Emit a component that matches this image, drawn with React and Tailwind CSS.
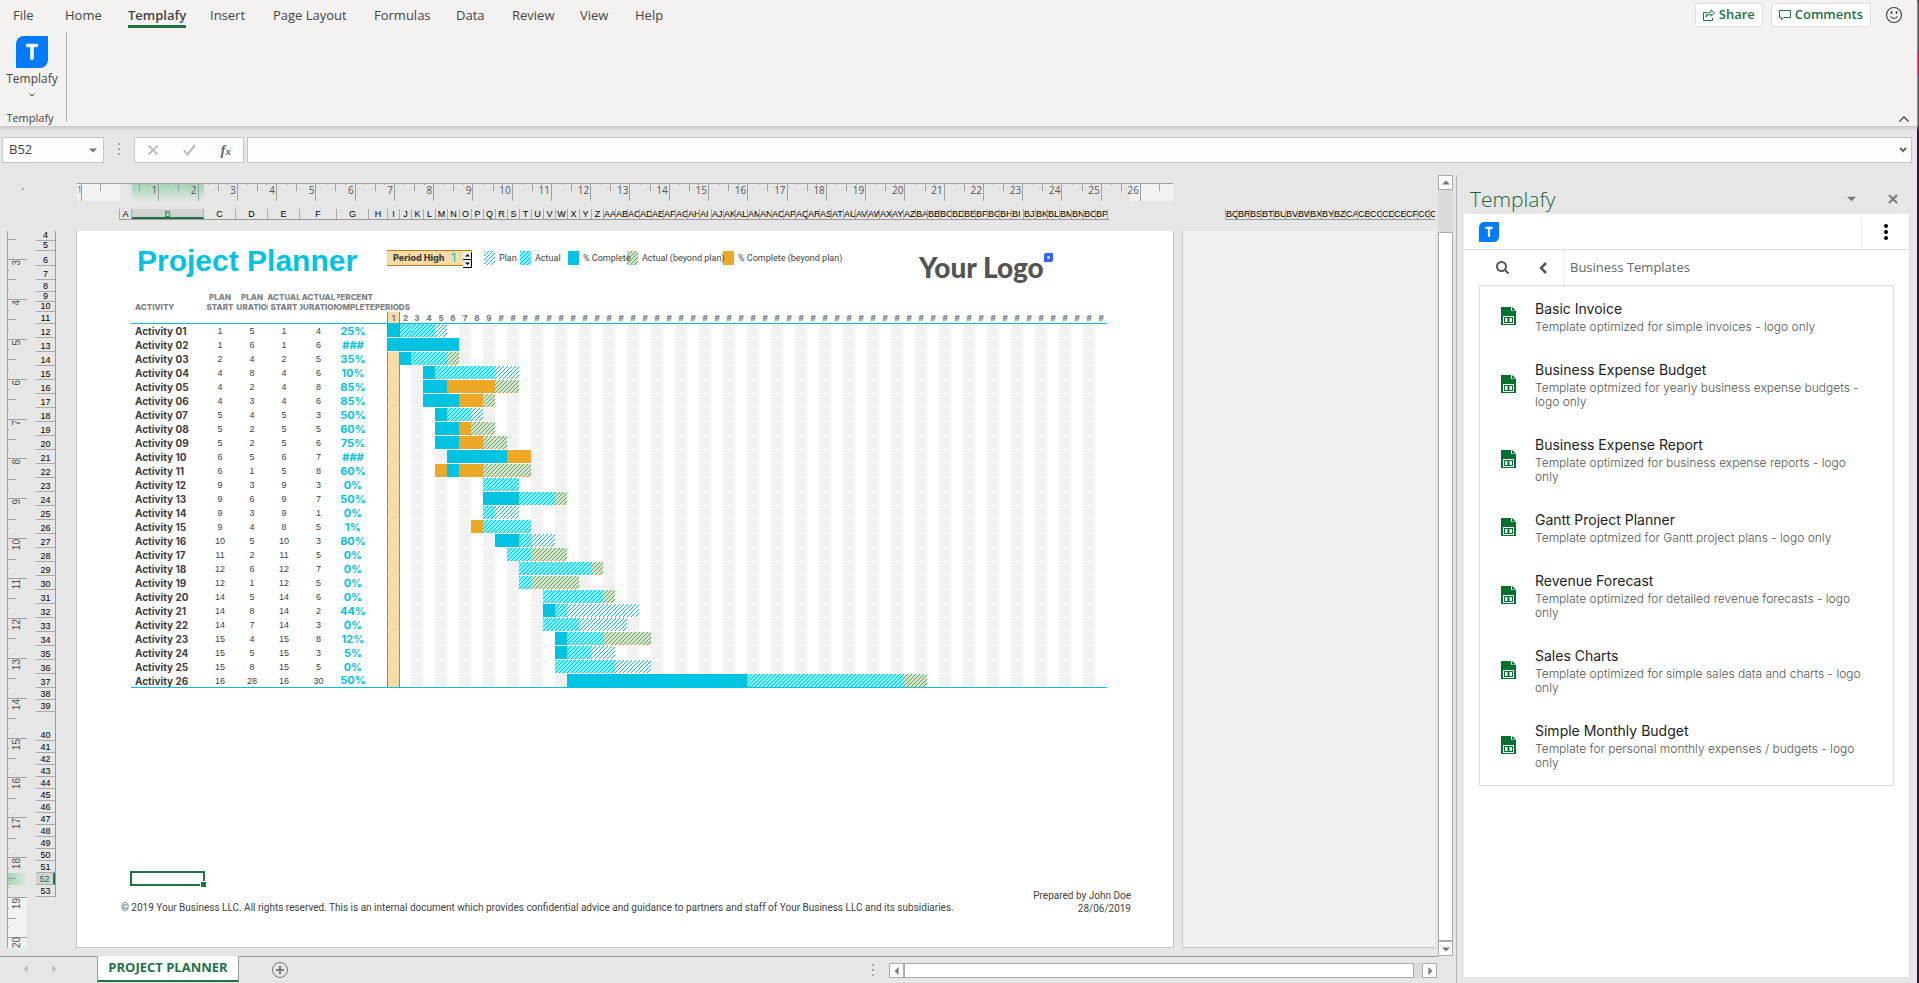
import React from "react";
import clsx from "clsx";

const MENU = [
  { name: "File", cls: "w-[52px]" },
  { name: "Home", cls: "w-[63px]" },
  { name: "Templafy", cls: "w-[82px]", active: true },
  { name: "Insert", cls: "w-[63px]" },
  { name: "Page Layout", cls: "w-[101px]" },
  { name: "Formulas", cls: "w-[82px]" },
  { name: "Data", cls: "w-[56px]" },
  { name: "Review", cls: "w-[68px]" },
  { name: "View", cls: "w-[55px]" },
  { name: "Help", cls: "w-[40px]" },
];

const TEMPLATES = [
  ["Basic Invoice", "Template optimized for simple invoices - logo only"],
  ["Business Expense Budget", "Template optmized for yearly business expense budgets - logo only"],
  ["Business Expense Report", "Template optimized for business expense reports - logo only"],
  ["Gantt Project Planner", "Template optmized for Gantt project plans - logo only"],
  ["Revenue Forecast", "Template optimized for detailed revenue forecasts - logo only"],
  ["Sales Charts", "Template optimized for simple sales data and charts - logo only"],
  ["Simple Monthly Budget", "Template for personal monthly expenses / budgets - logo only"],
];

// plan start, plan duration, actual start, actual duration, percent, first period, bar
// C = complete, A = actual, P = plan, B = actual beyond plan, O = complete beyond plan
const ACTIVITIES = [
  [1, 5, 1, 4, "25%", 1, "CAAAP"],
  [1, 6, 1, 6, "###", 1, "CCCCCC"],
  [2, 4, 2, 5, "35%", 2, "CAAAB"],
  [4, 8, 4, 6, "10%", 4, "CAAAAAPP"],
  [4, 2, 4, 8, "85%", 4, "CCOOOOBB"],
  [4, 3, 4, 6, "85%", 4, "CCCOOB"],
  [5, 4, 5, 3, "50%", 5, "CAAP"],
  [5, 2, 5, 5, "60%", 5, "CCOBB"],
  [5, 2, 5, 6, "75%", 5, "CCOOBB"],
  [6, 5, 6, 7, "###", 6, "CCCCCOO"],
  [6, 1, 5, 8, "60%", 5, "OCOOBBBB"],
  [9, 3, 9, 3, "0%", 9, "AAA"],
  [9, 6, 9, 7, "50%", 9, "CCCAAAB"],
  [9, 3, 9, 1, "0%", 9, "APP"],
  [9, 4, 8, 5, "1%", 8, "OAAAA"],
  [10, 5, 10, 3, "80%", 10, "CCAPP"],
  [11, 2, 11, 5, "0%", 11, "AABBB"],
  [12, 6, 12, 7, "0%", 12, "AAAAAAB"],
  [12, 1, 12, 5, "0%", 12, "ABBBB"],
  [14, 5, 14, 6, "0%", 14, "AAAAAB"],
  [14, 8, 14, 2, "44%", 14, "CAPPPPPP"],
  [14, 7, 14, 3, "0%", 14, "AAAPPPP"],
  [15, 4, 15, 8, "12%", 15, "CAAABBBB"],
  [15, 5, 15, 3, "5%", 15, "CAAPP"],
  [15, 8, 15, 5, "0%", 15, "AAAAAPPP"],
  [16, 28, 16, 30, "50%", 16, "CCCCCCCCCCCCCCCAAAAAAAAAAAAABB"],
];

const HATCH =
  "bg-[linear-gradient(135deg,#00c3e1_12.5%,transparent_12.5%,transparent_50%,#00c3e1_50%,#00c3e1_62.5%,transparent_62.5%)] bg-[length:4px_4px]";

const FILL = {
  C: "bg-[#00c3e1]",
  O: "bg-[#eea827]",
  P: `bg-white ${HATCH}`,
  A: `bg-[#80f2ff] ${HATCH}`,
  B: `bg-[#f8dba6] ${HATCH}`,
};

const PERIODS = Array.from({ length: 60 }, (_, i) => i + 1);

const LEGEND = [
  ["P", "Plan", "w-9"],
  ["A", "Actual", "w-12"],
  ["C", "% Complete", "w-[59px]"],
  ["B", "Actual (beyond plan)", "w-24"],
  ["O", "% Complete (beyond plan)", "w-[130px]"],
];

const columnName = (n) =>
  n <= 26
    ? String.fromCharCode(64 + n)
    : columnName(Math.floor((n - 1) / 26)) + String.fromCharCode(65 + ((n - 1) % 26));

const range = (from, to) => Array.from({ length: to - from + 1 }, (_, i) => from + i);

const WIDE_COLUMNS = [
  ["A", "w-3"],
  ["B", "w-[72px]"],
  ["C", "w-8"],
  ["D", "w-8"],
  ["E", "w-8"],
  ["F", "w-[37px]"],
  ["G", "w-8"],
  ["H", "w-[19px]"],
];

const TABLE_COLUMNS = ["w-[73px]", "w-8", "w-8", "w-8", "w-[37px]", "w-8", "w-[18px]"];

const rowHeight = (n) => {
  if (n === 4 || n === 5 || n === 9 || n === 10) return "h-[10px]";
  if (n === 6) return "h-[15px]";
  if (n === 7 || (n >= 12 && n <= 37)) return "h-[14px]";
  if (n === 40) return "h-[29px]";
  return "h-[12px]";
};

function TemplafyMark({ className }) {
  return (
    <svg viewBox="0 0 32 32" className={className} aria-hidden="true">
      <path d="M8 0h24v24a8 8 0 0 1-8 8H0V8a8 8 0 0 1 8-8z" fill="#007bff" />
      <path d="M11.5 9.500h9M16 9.500v13" stroke="#fff" strokeWidth="3.600" strokeLinecap="round" />
    </svg>
  );
}

function Triangle({ dir, className }) {
  const d = {
    up: "M0 7l5-5 5 5z",
    down: "M0 3l5 5 5-5z",
    left: "M7 0L2 5l5 5z",
    right: "M3 0l5 5-5 5z",
  }[dir];
  return (
    <svg viewBox="0 0 10 10" className={className} fill="currentColor" aria-hidden="true">
      <path d={d} />
    </svg>
  );
}

function Dots({ className }) {
  return (
    <svg viewBox="0 0 2 12" className={clsx("h-3 w-[2px]", className)} fill="currentColor" aria-hidden="true">
      <path d="M0 0h2v2H0zM0 5h2v2H0zM0 10h2v2H0z" />
    </svg>
  );
}

function SheetIcon() {
  return (
    <svg viewBox="0 0 15 18" className="h-[18px] w-[15px] shrink-0" aria-hidden="true">
      <path d="M0 0h10v4h5v14H0z" fill="#04702f" />
      <path d="M11 0l4 3.500h-4z" fill="#04702f" />
      <path d="M2 9h11v8H2z" fill="#fff" />
      <path d="M3 10h9v6H3z" fill="#04702f" />
      <path d="M4 11h2.500v4H4zM8.500 11H11v4H8.500z" fill="#fff" />
    </svg>
  );
}

function Ribbon() {
  return (
    <header className="relative z-10 bg-[#f3f2f0] shadow-[0_1px_4px_1px_#c4c3c2]">
      <div className="flex h-8 items-start justify-between">
        <nav className="flex pl-[13px] text-[13px] leading-[17px] text-[#444]">
          {MENU.map((m) => (
            <div key={m.name} className={m.cls}>
              <button
                className={clsx(
                  "mt-[7px] whitespace-nowrap pb-px",
                  m.active && "border-b-3 border-[#217346] font-semibold"
                )}
              >
                {m.name}
              </button>
            </div>
          ))}
        </nav>
        <div className="flex items-center pt-[3px] pr-[14px] text-[13px] font-semibold text-[#217346]">
          <button className="flex h-6 items-center gap-1 rounded-xs border border-[#e1dfdd] bg-white px-[7px]">
            <svg viewBox="0 0 12 12" className="h-3 w-3" fill="none" stroke="currentColor" aria-hidden="true">
              <path d="M4 3.500H.5v8h9V9M8 .8l3.500 3.200L8 7.200V5.300C5.500 5.300 4 6.300 3 8c.2-3 2-5 5-5.200z" />
            </svg>
            Share
          </button>
          <button className="ml-2 flex h-6 items-center gap-1 rounded-xs border border-[#e1dfdd] bg-white px-[7px]">
            <svg viewBox="0 0 12 12" className="h-3 w-3" fill="none" stroke="currentColor" aria-hidden="true">
              <path d="M.5 1.500h11v7H5l-2.500 2.500v-2.500h-2z" />
            </svg>
            Comments
          </button>
          <button className="ml-[14px]" aria-label="Feedback">
            <svg viewBox="0 0 18 18" className="h-[18px] w-[18px]" fill="none" stroke="#444" aria-hidden="true">
              <circle cx="9" cy="9" r="7.500" strokeWidth="1.200" />
              <path d="M5.500 10.500c1.500 2.500 5.500 2.500 7 0" strokeWidth="1.200" />
              <path d="M6.500 5v3M11.500 5v3" strokeWidth="1.500" />
            </svg>
          </button>
        </div>
      </div>
      <div className="flex h-[94px] items-start justify-between">
        <div className="flex h-[90px] w-[67px] flex-col items-center border-r border-[#b5b3b1] pr-[2px] pt-1 text-[12px] text-[#444]">
          <button className="flex flex-col items-center">
            <TemplafyMark className="h-8 w-8" />
            <span className="mt-[3px] leading-4">Templafy</span>
            <svg viewBox="0 0 6 4" className="mt-[6px] h-1 w-[6px]" fill="none" stroke="#444" aria-hidden="true">
              <path d="M.5 .5L3 3 5.500.5" />
            </svg>
          </button>
          <span className="mt-[15px] pr-1 text-[11px] leading-3">Templafy</span>
        </div>
        <button className="mr-[8px] mt-[84px]" aria-label="Collapse the ribbon">
          <svg viewBox="0 0 10 6" className="h-[6px] w-[10px]" fill="none" stroke="#444" strokeWidth="1.300" aria-hidden="true">
            <path d="M.5 5.500L5 1l4.500 4.500" />
          </svg>
        </button>
      </div>
    </header>
  );
}

function FormulaBar() {
  return (
    <div className="flex h-[37px] items-end pl-[2px] pr-[5px] text-[#444]">
      <button className="flex h-[26px] w-[102px] items-center justify-between border border-[#c6c6c6] bg-[#fdfdfd] px-[6px] text-[13px]">
        B52
        <Triangle dir="down" className="h-2 w-2 text-[#777]" />
      </button>
      <Dots className="mx-[14px] mb-2 text-[#a8a8a8]" />
      <div className="flex h-[26px] w-[110px] items-center justify-around border border-[#c6c6c6] bg-[#fdfdfd]">
        <button aria-label="Cancel">
          <svg viewBox="0 0 12 12" className="h-3 w-3" stroke="#bdbdbd" strokeWidth="1.800" aria-hidden="true">
            <path d="M1.500 1.500l9 9M10.500 1.500l-9 9" />
          </svg>
        </button>
        <button aria-label="Enter">
          <svg viewBox="0 0 13 12" className="h-3 w-[13px]" fill="none" stroke="#bdbdbd" strokeWidth="2.200" aria-hidden="true">
            <path d="M1 6.500l3.500 4L12 1" />
          </svg>
        </button>
        <button
          className="font-['Liberation_Serif',serif] text-[15px] font-bold italic leading-4 text-[#666]"
          aria-label="Insert function"
        >
          f<span className="text-[11px]">x</span>
        </button>
      </div>
      <div className="ml-[3px] flex h-[26px] flex-1 items-center border border-[#c6c6c6] bg-[#fdfdfd] pr-1">
        <input aria-label="Formula" className="min-w-0 flex-1 bg-transparent px-1 text-[13px] outline-none" />
        <button aria-label="Expand formula bar">
          <svg viewBox="0 0 8 6" className="h-[6px] w-2" fill="none" stroke="#666" strokeWidth="2" aria-hidden="true">
            <path d="M1 1l3 3 3-3" />
          </svg>
        </button>
      </div>
    </div>
  );
}

function HorizontalRuler() {
  return (
    <div className="relative flex h-[18px] w-[1096px] shrink-0 border-t border-[#a0a0a0] text-[10px] leading-3 text-[#555]">
      {/* margins and the span of the selected column */}
      <div className="absolute inset-y-0 left-0 w-[43px] bg-[#f2f2f2]" />
      <div className="absolute inset-y-0 right-0 w-[43px] bg-[#f2f2f2]" />
      <div className="absolute inset-y-0 left-[55px] w-[72px] bg-linear-to-b from-[#9fd5b5] to-[#e2e6e3]" />
      <div className="relative w-[5px] border-r border-[#a0a0a0] text-[9px]">1</div>
      <div className="relative flex w-[38px]">
        <div className="h-[7px] w-1/2 border-r border-[#a0a0a0]" />
      </div>
      <div className="relative grid flex-1 grid-cols-[repeat(26,1fr)]">
        {range(1, 26).map((n) => (
          <div key={n} className="relative flex justify-end border-r border-[#a0a0a0] pr-px">
            <span className="absolute left-1/2 top-0 h-[7px] border-r border-[#a0a0a0]" />
            <span className="absolute left-1/4 top-0 h-px border-r border-[#a0a0a0]" />
            <span className="absolute left-3/4 top-0 h-px border-r border-[#a0a0a0]" />
            {n}
          </div>
        ))}
      </div>
      <div className="relative flex w-8">
        <div className="h-[7px] w-[19px] border-r border-[#a0a0a0]" />
      </div>
    </div>
  );
}

function ColumnHeadings({ from, to, wide }) {
  return (
    <div className="flex h-[11px] overflow-hidden border-b border-[#999] text-[9px] leading-[10px] text-black">
      {wide &&
        WIDE_COLUMNS.map(([name, width]) => (
          <div
            key={name}
            className={clsx(
              "shrink-0 overflow-hidden border-r border-[#aaa] text-center",
              width,
              name === "B" && "border-b-2 border-b-[#217346] bg-[#d2d2d2] text-[#217346]"
            )}
          >
            {name}
          </div>
        ))}
      {range(from, to).map((n) => (
        <div
          key={n}
          className={clsx(
            "w-3 shrink-0 overflow-hidden whitespace-nowrap border-r border-[#aaa]",
            n > 26 ? "text-left" : "text-center"
          )}
        >
          {columnName(n)}
        </div>
      ))}
    </div>
  );
}

function VerticalRuler() {
  return (
    <div className="relative w-5 shrink-0 border-l border-[#a0a0a0] text-[10px] text-[#555]">
      <div className="absolute inset-x-0 bottom-0 h-[51px] bg-[#f2f2f2]" />
      <div className="absolute inset-x-0 bottom-[63px] h-3 bg-linear-to-r from-[#9fd5b5] to-[#e2e6e3]" />
      <div className="relative flex h-[28px] items-start">
        <div className="mt-2 w-2 border-t border-[#a0a0a0]" />
      </div>
      <div className="relative grid h-[678px] grid-rows-[repeat(17,1fr)]">
        {range(3, 19).map((n) => (
          <div key={n} className="relative border-t border-[#a0a0a0]">
            <span className="block rotate-180 pr-[3px] leading-3 [writing-mode:vertical-rl]">{n}</span>
            <span className="absolute left-0 top-1/2 w-2 border-t border-[#a0a0a0]" />
            <span className="absolute left-0 top-1/4 w-px border-t border-[#a0a0a0]" />
            <span className="absolute left-0 top-3/4 w-px border-t border-[#a0a0a0]" />
          </div>
        ))}
      </div>
      <div className="relative border-t border-[#a0a0a0]">
        <span className="block h-[10px] rotate-180 pr-[3px] leading-3 [writing-mode:vertical-rl]">20</span>
      </div>
    </div>
  );
}

function RowHeadings() {
  return (
    <div className="w-5 shrink-0 self-start border-r border-[#999] text-[9px] leading-[10px] text-black">
      {range(4, 53).map((n) => (
        <div
          key={n}
          className={clsx(
            "flex items-end justify-center border-b border-[#aaa]",
            rowHeight(n),
            n === 52 && "border-r-2 border-r-[#217346] bg-[#d2d2d2] text-[#217346]"
          )}
        >
          {n}
        </div>
      ))}
    </div>
  );
}

function PlanTable() {
  const head = "overflow-hidden p-0 font-extrabold";
  return (
    <table className="w-[976px] table-fixed border-separate border-spacing-0 text-[#3f3f3f]">
      <colgroup>
        {TABLE_COLUMNS.map((width, i) => (
          <col key={i} className={width} />
        ))}
        {PERIODS.map((p) => (
          <col key={p} className="w-3" />
        ))}
      </colgroup>
      <thead className="whitespace-nowrap font-['Inter',sans-serif] text-[8px] leading-[10px] text-[#808080]">
        <tr className="h-[10px]">
          <th className="p-0" />
          {["PLAN", "PLAN", "ACTUAL", "ACTUAL"].map((t, i) => (
            <th key={i} className={head}>
              <span className="flex justify-center">{t}</span>
            </th>
          ))}
          <th colSpan={2} className={head}>
            <span className="flex w-[36px] justify-end overflow-hidden">PERCENT</span>
          </th>
          <th colSpan={60} className="p-0" />
        </tr>
        <tr className="h-[10px]">
          <th className={clsx(head, "pl-1 text-left")}>ACTIVITY</th>
          {["START", "DURATION", "START", "DURATION"].map((t, i) => (
            <th key={i} className={head}>
              <span className="flex justify-center">{t}</span>
            </th>
          ))}
          <th colSpan={6} className={head}>
            <span className="flex">
              <span className="flex w-[38px] justify-end overflow-hidden">COMPLETE</span>
              <span>PERIODS</span>
            </span>
          </th>
          <th colSpan={56} className="p-0" />
        </tr>
        <tr className="h-3">
          <th colSpan={7} className="border-b border-[#00c3e1] p-0" />
          {PERIODS.map((p) => (
            <th
              key={p}
              className={clsx(
                "border-b border-[#00c3e1] p-0 text-center font-extrabold",
                p === 1 && "border-l border-l-[#b9821d] bg-[#f8dba6]",
                p === 2 && "border-l border-l-[#b9821d]"
              )}
            >
              {p < 10 ? p : "#"}
            </th>
          ))}
        </tr>
      </thead>
      <tbody className="text-[9px] leading-3">
        {ACTIVITIES.map(([ps, pd, as, ad, pct, first, bar], i) => {
          const last = i === ACTIVITIES.length - 1;
          const edge = last && "border-b border-b-[#00c3e1]";
          return (
            <tr key={i} className="h-[14px]">
              <td
                className={clsx(
                  "overflow-hidden whitespace-nowrap p-0 pl-1 font-['Inter',sans-serif] text-[10px] font-bold",
                  edge
                )}
              >
                Activity {String(i + 1).padStart(2, "0")}
              </td>
              {[ps, pd, as, ad].map((v, j) => (
                <td key={j} className={clsx("p-0 text-center", edge)}>
                  {v}
                </td>
              ))}
              <td
                className={clsx(
                  "p-0 pb-px text-center font-['Inter',sans-serif] text-[11px] font-bold text-[#00c3e1]",
                  edge
                )}
              >
                {pct}
              </td>
              <td className={clsx("p-0", edge)} />
              {PERIODS.map((p) => {
                const kind = bar[p - first];
                return (
                  <td
                    key={p}
                    className={clsx(
                      "border-b bg-clip-padding p-0",
                      kind ? FILL[kind] : p === 1 ? "bg-[#f8dba6]" : p % 2 === 1 && "bg-[#f2f2f2]",
                      last ? "border-b-[#00c3e1]" : p === 1 && !kind ? "border-b-[#f8dba6]" : "border-b-white",
                      p < 3 && "border-l border-l-[#b9821d]"
                    )}
                  />
                );
              })}
            </tr>
          );
        })}
      </tbody>
    </table>
  );
}

function PlannerPage() {
  return (
    <div className="flex w-[1098px] shrink-0 flex-col border-b border-l border-r border-[#c6c6c6] bg-white text-[#3f3f3f]">
      <div className="flex h-[61px] pl-[60px]">
        <h1 className="mt-3 w-[250px] whitespace-nowrap font-['Liberation_Sans',Arial,sans-serif] text-[30px] font-bold leading-[36px] text-[#00c3e1]">
          Project Planner
        </h1>
        <div className="mt-[19px] flex h-4 w-[85px] items-center border-y border-[#b9821d] bg-[#f8dba6] pl-[6px] font-['Inter',sans-serif]">
          <span className="w-[58px] whitespace-nowrap text-[9px] font-extrabold">Period High</span>
          <span className="w-3 text-[12px] text-[#00c3e1]">1</span>
          <span className="mt-1 flex h-4 w-[9px] flex-col text-black">
            <button
              className="flex h-2 items-center justify-center border-b border-r border-black bg-[#f0f0f0]"
              aria-label="Next period"
            >
              <Triangle dir="up" className="h-[5px] w-[5px]" />
            </button>
            <button
              className="flex h-2 items-center justify-center border-b border-r border-black bg-[#f0f0f0]"
              aria-label="Previous period"
            >
              <Triangle dir="down" className="h-[5px] w-[5px]" />
            </button>
          </span>
        </div>
        <div className="mt-5 ml-3 flex h-[14px] font-['Roboto',sans-serif] text-[9px]">
          {LEGEND.map(([kind, label, width]) => (
            <div key={label} className={clsx("flex gap-1 whitespace-nowrap leading-[14px]", width)}>
              <span className={clsx("h-[14px] w-[11px] shrink-0", FILL[kind])} />
              <span className="relative z-10">{label}</span>
            </div>
          ))}
        </div>
        <div className="ml-[66px] flex items-start">
          <span className="mt-5 whitespace-nowrap font-['Lato',sans-serif] text-[28px] font-black leading-[32px] text-[#545454]">
            Your Logo
          </span>
          <svg viewBox="0 0 9 9" className="mt-[22px] h-[9px] w-[9px]" aria-hidden="true">
            <path d="M2 0h7v7a2 2 0 0 1-2 2H0V2a2 2 0 0 1 2-2z" fill="#2f62ff" />
            <circle cx="4.500" cy="4.500" r="1.500" fill="#dfe7ff" />
          </svg>
        </div>
      </div>
      <div className="ml-[54px]">
        <PlanTable />
      </div>
      <div className="relative ml-[53px] mt-[183px] h-[15px] w-[75px] border-2 border-[#217346]">
        <span className="absolute -bottom-[3px] -right-[3px] h-[6px] w-[6px] border-l border-t border-white bg-[#217346]" />
      </div>
      <div className="flex items-end justify-between pl-[44px] pr-[42px] pt-[3px] font-['Roboto',sans-serif] text-[10px]">
        <p className="whitespace-nowrap leading-[14px]">
          © 2019 Your Business LLC. All rights reserved. This is an internal document which provides confidential advice
          and guidance to partners and staff of Your Business LLC and its subsidiaries.
        </p>
        <p className="text-right leading-[13px]">
          Prepared by John Doe
          <br />
          28/06/2019
        </p>
      </div>
    </div>
  );
}

function ScrollButton({ dir, className }) {
  return (
    <button
      className={clsx("flex shrink-0 items-center justify-center border border-[#ababab] bg-white text-[#777]", className)}
      aria-label={`Scroll ${dir}`}
    >
      <Triangle dir={dir} className="h-2 w-2" />
    </button>
  );
}

function Sheet() {
  return (
    <section className="flex min-w-0 flex-1 flex-col">
      <div className="flex flex-1">
        <div className="min-w-0 flex-1 overflow-hidden font-['Liberation_Sans',Arial,sans-serif]">
          <div className="flex h-[68px]">
            <div className="w-[77px] shrink-0 pl-[21px] pt-6">
              <svg viewBox="0 0 3 3" className="h-[3px] w-[3px]" aria-hidden="true">
                <path d="M3 0v3H0z" fill="#b0b0b0" />
              </svg>
            </div>
            <div className="w-[1096px] shrink-0 pt-5 font-['Open_Sans',sans-serif]">
              <HorizontalRuler />
              <div className="ml-[42px] mt-[8px] w-[990px] border-l border-[#aaa] font-['Liberation_Sans',Arial,sans-serif]">
                <ColumnHeadings from={9} to={68} wide />
              </div>
            </div>
            <div className="min-w-0 flex-1 pt-[46px] pl-[52px]">
              <div className="border-l border-[#aaa]">
                <ColumnHeadings from={69} to={86} />
              </div>
            </div>
          </div>
          <div className="flex h-[717px] pl-[7px]">
            <VerticalRuler />
            <div className="w-[9px] shrink-0" />
            <RowHeadings />
            <div className="w-5 shrink-0" />
            <PlannerPage />
            <div className="ml-2 min-w-0 flex-1 border-b border-l border-[#c6c6c6] bg-[#f1f1f1]" />
          </div>
        </div>
        <div className="mx-[3px] mt-3 flex w-[15px] flex-col bg-[#dadada]">
          <ScrollButton dir="up" className="h-[15px]" />
          <div className="mt-[42px] flex-1 border border-[#ababab] bg-white" />
          <ScrollButton dir="down" className="h-[15px]" />
        </div>
      </div>
      <div className="mr-[18px] flex h-[27px] items-start border-t border-[#999]">
        <button className="ml-[22px] mt-2" aria-label="Previous sheet">
          <Triangle dir="left" className="h-2 w-2 text-[#bdbdbd]" />
        </button>
        <button className="ml-5 mt-2" aria-label="Next sheet">
          <Triangle dir="right" className="h-2 w-2 text-[#bdbdbd]" />
        </button>
        <button className="-mt-px ml-[39px] flex h-[26px] w-[142px] items-center justify-center whitespace-nowrap border-x border-b-2 border-x-[#999] border-b-[#217346] bg-white text-[13px] font-bold text-[#217346]">
          PROJECT PLANNER
        </button>
        <button className="ml-8 mt-1" aria-label="New sheet">
          <svg viewBox="0 0 18 18" className="h-[18px] w-[18px]" fill="none" stroke="#777" aria-hidden="true">
            <circle cx="9" cy="9" r="7.500" />
            <path d="M9 5v8M5 9h8" strokeWidth="2" />
          </svg>
        </button>
        <div className="flex-1" />
        <Dots className="mr-[15px] mt-[7px] text-[#a8a8a8]" />
        <div className="mr-px mt-[6px] flex h-[15px] w-[548px] bg-[#dadada]">
          <ScrollButton dir="left" className="w-[15px]" />
          <div className="mr-2 flex-1 border border-[#ababab] bg-white" />
          <ScrollButton dir="right" className="w-[15px]" />
        </div>
      </div>
    </section>
  );
}

function TemplatePane() {
  return (
    <aside className="mt-3 flex w-[461px] shrink-0 flex-col border-l border-[#b5b5b5] pb-[6px] pl-[7px] pr-2">
      <div className="flex h-[39px] items-center pl-[6px] pt-2 text-[#777]">
        <h2 className="flex-1 text-[21px] font-light leading-6 text-[#1a6340]">Templafy</h2>
        <button className="mr-8" aria-label="Pane options">
          <Triangle dir="down" className="h-[9px] w-[9px]" />
        </button>
        <button className="mr-[11px]" aria-label="Close pane">
          <svg viewBox="0 0 10 10" className="h-[10px] w-[10px]" stroke="currentColor" strokeWidth="2" aria-hidden="true">
            <path d="M1 1l8 8M9 1L1 9" />
          </svg>
        </button>
      </div>
      <div className="flex-1 bg-white">
        <div className="flex h-9 items-center border-b border-[#dcdcdc] pl-[15px]">
          <TemplafyMark className="h-5 w-5" />
          <div className="flex-1" />
          <button className="flex h-[30px] w-12 items-center justify-center border-l border-dotted border-[#ddd]" aria-label="More">
            <svg viewBox="0 0 4 16" className="h-4 w-1" aria-hidden="true">
              <circle cx="2" cy="2" r="2" />
              <circle cx="2" cy="8" r="2" />
              <circle cx="2" cy="14" r="2" />
            </svg>
          </button>
        </div>
        <div className="flex h-[35px] items-center text-[#555]">
          <button className="ml-8" aria-label="Search">
            <svg viewBox="0 0 13 13" className="h-[13px] w-[13px]" fill="none" stroke="currentColor" strokeWidth="2" aria-hidden="true">
              <circle cx="5.500" cy="5.500" r="4.500" />
              <path d="M9 9l3.500 3.500" />
            </svg>
          </button>
          <button className="ml-[30px]" aria-label="Back">
            <svg viewBox="0 0 8 12" className="h-3 w-2" fill="none" stroke="currentColor" strokeWidth="2.500" aria-hidden="true">
              <path d="M7 1L2 6l5 5" />
            </svg>
          </button>
          <span className="ml-[17px] flex h-full items-center border-l border-dotted border-[#ddd] pl-[5px] text-[13px] text-[#666]">
            Business Templates
          </span>
        </div>
        <ul className="mx-[15px] border border-[#dcdcdc] pb-[2px] font-['Inter',sans-serif]">
          {TEMPLATES.map(([title, text]) => (
            <li key={title}>
              <button className="flex w-full items-center gap-[19px] pb-[13px] pl-[21px] pr-[26px] pt-3 text-left">
                <SheetIcon />
                <span>
                  <span className="block text-[14px] leading-[22px] text-[#222]">{title}</span>
                  <span className="block text-[12px] font-light leading-[14px] text-[#555]">{text}</span>
                </span>
              </button>
            </li>
          ))}
        </ul>
      </div>
    </aside>
  );
}

export default function App() {
  return (
    <div className="relative flex min-h-screen flex-col border-r-2 border-[#3b0d45] bg-[#e6e6e6] font-['Open_Sans',sans-serif]">
      <Ribbon />
      <FormulaBar />
      <main className="flex flex-1">
        <Sheet />
        <TemplatePane />
      </main>
      <span className="absolute -right-[2px] top-[51px] z-20 h-6 w-px bg-[#e01e5a]" />
    </div>
  );
}
